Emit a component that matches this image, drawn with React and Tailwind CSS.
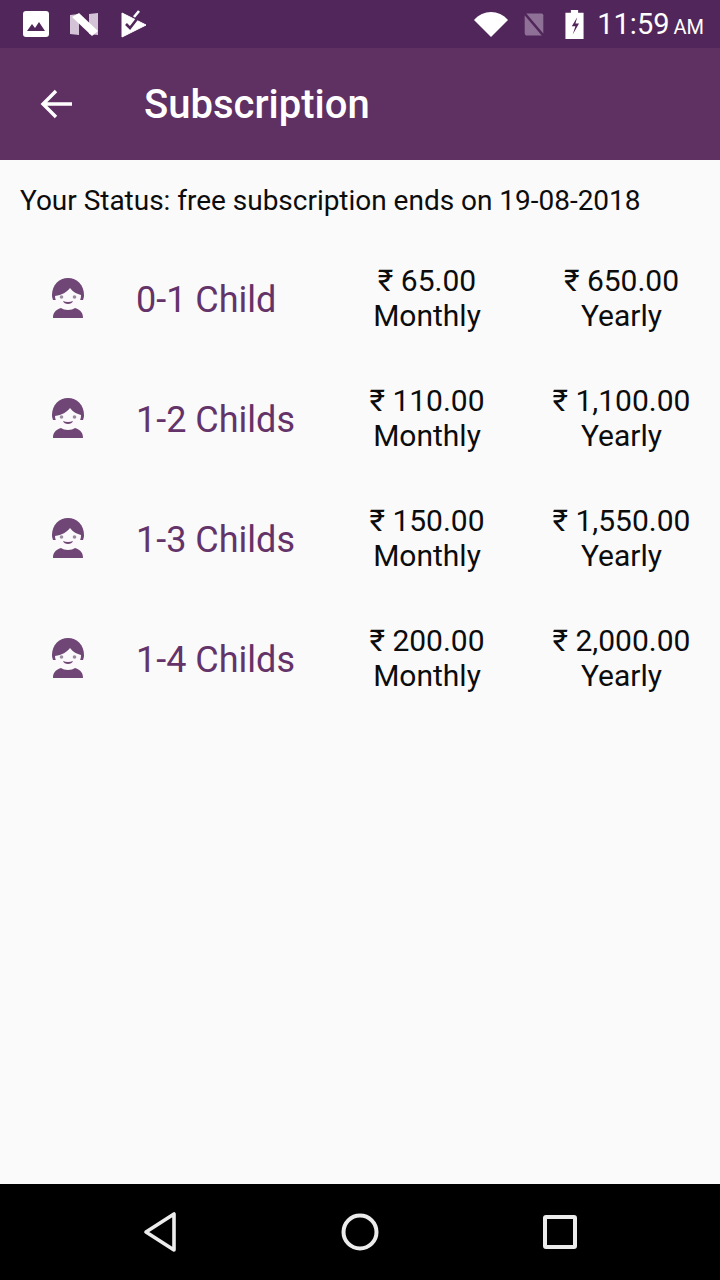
import React from "react";

const plans = [
  { label: "0-1 Child", monthly: "65.00", yearly: "650.00" },
  { label: "1-2 Childs", monthly: "110.00", yearly: "1,100.00" },
  { label: "1-3 Childs", monthly: "150.00", yearly: "1,550.00" },
  { label: "1-4 Childs", monthly: "200.00", yearly: "2,000.00" },
];

function ChildIcon() {
  return (
    <svg width="36" height="44" viewBox="0 0 36 44">
      {/* hair */}
      <path d="M2 19C2 9 9 2 18 2s16 7 16 17c0 2-.5 3.5-1 5H3c-.5-1.500-1-3-1-5z" fill="#6f4675" />
      {/* face */}
      <path d="M5 20c7-1 12-4 15-8 3 4 7 6 11 7 .5 7-6 13-13 13S5 27 5 20z" fill="#fbf9fb" />
      <circle cx="11.500" cy="21" r="1.800" fill="#9a8d9d" />
      <circle cx="24.500" cy="21" r="1.800" fill="#9a8d9d" />
      <path d="M13 25c3 1.200 7 1.200 10 0-1 4-9 4-10 0z" fill="#6f4675" />
      {/* shoulders */}
      <path d="M3 42c0-5 2-8 8-10 3 2.500 11 2.500 14 0 6 2 8 5 8 10z" fill="#6f4675" />
    </svg>
  );
}

function Price({ amount, period }) {
  return (
    <div className="text-center text-[30px] leading-[35px] text-[#0c0c0c] whitespace-nowrap">
      <div>₹ {amount}</div>
      <div>{period}</div>
    </div>
  );
}

export default function App() {
  return (
    <div className="flex flex-col h-[1280px] bg-[#fafafa] font-['Roboto',sans-serif]">
      {/* status bar */}
      <div className="h-12 bg-[#51265a] flex items-center justify-between pl-[23px] pr-4 text-white">
        <div className="flex items-center">
          <svg width="26" height="26" viewBox="0 0 26 26">
            <rect width="26" height="26" rx="3" fill="#fff" />
            <path d="M4 20l5-7 3 4 4-6 6 9z" fill="#51265a" />
          </svg>
          <svg width="28" height="24" viewBox="0 0 28 24" className="ml-[21px]">
            <path d="M0 3l9-1v21l-9-1z" fill="#d4c3d6" />
            <path d="M19 2l9-1v22l-9-1z" fill="#d4c3d6" />
            <path d="M2 5l7-4 19 18-6 5z" fill="#fff" />
          </svg>
          <svg width="26" height="28" viewBox="0 0 26 28" className="ml-[23px]">
            <path d="M1 3l24 12L1 27z" fill="#fff" stroke="#fff" strokeWidth="1" strokeLinejoin="round" />
            <path d="M5 14l4 4 10-13" stroke="#51265a" strokeWidth="2.600" fill="none" />
            <path d="M13 7l5-6" stroke="#fff" strokeWidth="2.600" />
          </svg>
        </div>
        <div className="flex items-center">
          <svg width="34" height="27" viewBox="0 0 38 28">
            <path d="M0 9C5 3 12 0 19 0s14 3 19 9L19 28z" fill="#fff" />
          </svg>
          <svg width="22" height="27" viewBox="0 0 26 28" className="ml-[15px]">
            <path d="M2 4a3 3 0 0 1 3-3h17a2 2 0 0 1 2 2v22a2 2 0 0 1-2 2H5a3 3 0 0 1-3-3z" fill="#8f7096" />
            <path d="M2 1l23 27" stroke="#51265a" strokeWidth="3" />
          </svg>
          <svg width="19" height="29" viewBox="0 0 20 32" className="ml-[20px]">
            <path d="M6 0h8v3h6v29H0V3h6z" fill="#fff" />
            <path d="M13 8l-6 10h4l-3 9 7-12h-4z" fill="#51265a" />
          </svg>
          <span className="ml-[13px] text-[29px] leading-none mt-[1px]">11:59</span>
          <span className="ml-1 text-[20px] leading-none mt-[6px]">AM</span>
        </div>
      </div>

      {/* app bar */}
      <div className="h-28 bg-[#5f3062] flex items-center text-white">
        <svg width="32" height="32" viewBox="0 0 32 32" className="ml-10" fill="none" stroke="#fff" strokeWidth="3.400">
          <path d="M32 16H3M16 3L3 16l13 13" />
        </svg>
        <h1 className="ml-[72px] text-[40px] font-medium mt-[1px]">Subscription</h1>
      </div>

      {/* content */}
      <div className="flex-1">
        <p className="pl-5 pt-[24px] h-[78px] text-[28px] leading-[34px] text-[#0c0c0c] tracking-[-0.02px]">
          Your Status: free subscription ends on 19-08-2018
        </p>
        {plans.map((plan) => (
          <div key={plan.label} className="h-[120px] flex items-center">
            <div className="w-[136px] flex justify-center">
              <ChildIcon />
            </div>
            <div className="w-[194px] text-[36px] text-[#633369] whitespace-nowrap mt-1">{plan.label}</div>
            <div className="w-[194px] flex justify-center">
              <Price amount={plan.monthly} period="Monthly" />
            </div>
            <div className="w-[195px] flex justify-center">
              <Price amount={plan.yearly} period="Yearly" />
            </div>
          </div>
        ))}
      </div>

      {/* nav bar */}
      <div className="h-24 bg-black flex items-center">
        <svg width="40" height="44" viewBox="0 0 40 44" className="ml-[140px]" fill="none" stroke="#ececec" strokeWidth="3.600" strokeLinejoin="round">
          <path d="M34 4v36L6 22z" />
        </svg>
        <svg width="40" height="40" viewBox="0 0 40 40" className="ml-[160px]" fill="none" stroke="#ececec" strokeWidth="4">
          <circle cx="20" cy="20" r="16.500" />
        </svg>
        <svg width="36" height="36" viewBox="0 0 36 36" className="ml-[162px]" fill="none" stroke="#ececec" strokeWidth="4" strokeLinejoin="round">
          <rect x="3" y="3" width="30" height="30" rx="1" />
        </svg>
      </div>
    </div>
  );
}
